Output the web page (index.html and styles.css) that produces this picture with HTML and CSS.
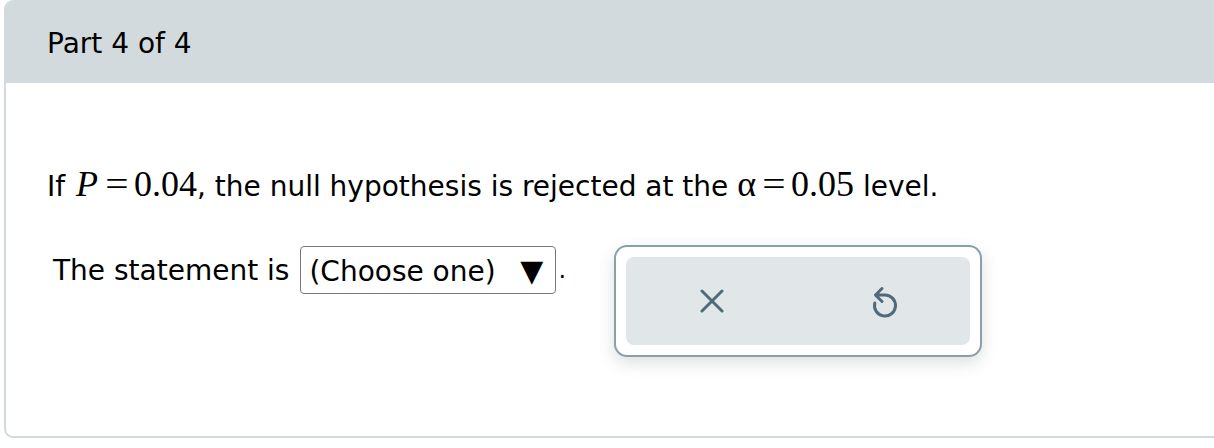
FILE: index.html
```html
<!DOCTYPE html>
<html lang="en">
<head>
<meta charset="utf-8">
<title>Part 4 of 4</title>
<link rel="stylesheet" href="styles.css">
</head>
<body>
<div class="card">
  <div class="header">Part 4 of 4</div>
  <div class="content">
    <p class="question">If <span class="math"><i class="mi">P</i><span class="mo">=</span>0.04</span>, the null hypothesis is rejected at the <span class="math"><span class="alpha">α</span><span class="mo">=</span>0.05</span> level.</p>
    <div class="row">
      <div class="sentence">
        <span>The statement is</span>
        <span class="select"><span>(Choose one)</span><span class="caret">▼</span></span>
        <span class="dot">.</span>
      </div>
      <div class="actions">
        <div class="tools">
          <button class="tool" aria-label="Clear">
            <svg width="24" height="24" viewBox="0 0 24 24"><path d="M2 2 L22 22 M22 2 L2 22" fill="none" stroke="#4d6b78" stroke-width="3" stroke-linecap="round"/></svg>
          </button>
          <button class="tool" aria-label="Undo">
            <svg width="28" height="36" viewBox="0 0 28 36"><path d="M12 5.5 L5.5 12 L12 18.5 M5.5 12 H15 A10.5 10.5 0 1 1 4.8 20" fill="none" stroke="#4d6b78" stroke-width="3" stroke-linecap="round" stroke-linejoin="round"/></svg>
          </button>
        </div>
      </div>
    </div>
  </div>
</div>
</body>
</html>
```
FILE: styles.css
```css
html, body {
  margin: 0;
  padding: 0;
  background: #ffffff;
  overflow: hidden;
}
body {
  font-family: "DejaVu Sans", Verdana, sans-serif;
  color: #000;
}
.card {
  margin-left: 4px;
  width: 1240px;
  height: 436px;
  border: 2px solid #d3dade;
  border-top: 0;
  border-radius: 9px;
  overflow: hidden;
  box-sizing: content-box;
}
.header {
  background: #d3dade;
  height: 83px;
  box-sizing: border-box;
  padding: 26px 0 0 41px;
  font-size: 28px;
  line-height: 36px;
}
.content {
  padding: 0 0 0 41px;
}
.question {
  margin: 81px 0 0 0;
  font-size: 28px;
  line-height: 40px;
  height: 40px;
}
.math {
  font-family: "Liberation Serif", "Times New Roman", serif;
  font-size: 36px;
}
.mi {
  font-style: italic;
  margin-left: 2px;
  margin-right: 2px;
}
.alpha {
  margin-right: 1px;
}
.mo {
  display: inline-block;
  width: 34px;
  text-align: center;
  transform: scaleX(1.15);
}
.row {
  display: flex;
  align-items: flex-start;
  margin-top: 40px;
  padding-left: 6px;
}
.sentence {
  display: flex;
  align-items: center;
  height: 48px;
  margin-top: 2px;
  font-size: 28px;
}
.select {
  display: flex;
  align-items: center;
  justify-content: space-between;
  box-sizing: border-box;
  width: 256px;
  height: 48px;
  margin-left: 11px;
  padding: 2px 12px 0 8px;
  border: 1px solid #787878;
  border-radius: 4px;
}
.caret {
  font-size: 30px;
  line-height: 1;
}
.dot {
  margin-left: 2px;
  font-size: 24px;
}
.actions {
  margin-left: 48px;
  margin-top: 1px;
  width: 368px;
  height: 112px;
  box-sizing: border-box;
  padding: 10px;
  border: 2px solid #8c9fa8;
  border-radius: 13px;
  background: #fff;
  box-shadow: 0 6px 16px rgba(60, 80, 90, 0.18);
}
.tools {
  display: flex;
  height: 100%;
  background: #e1e6e9;
  border-radius: 8px;
}
.tool {
  flex: 1;
  display: flex;
  align-items: center;
  justify-content: center;
  border: 0;
  background: transparent;
  padding: 0;
  margin: 0;
}
```
